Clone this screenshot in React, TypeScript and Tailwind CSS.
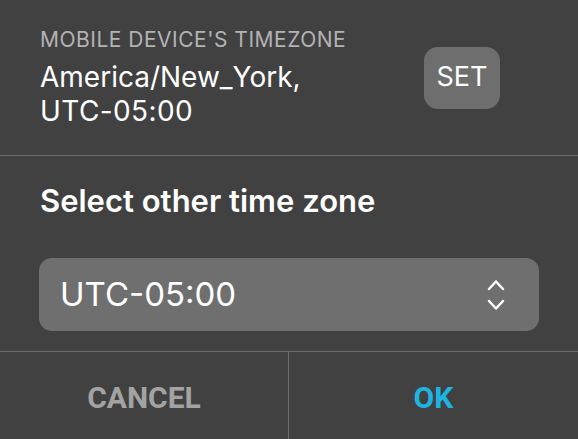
import React from 'react';

const sans = "font-['Inter','Noto_Sans',sans-serif]";

function UpDownIcon() {
  return (
    <svg width="20" height="36" viewBox="0 0 20 36" fill="none" stroke="currentColor" strokeWidth="2.5" strokeLinecap="round" strokeLinejoin="round">
      <polyline points="3,12 10,4.5 17,12" />
      <polyline points="3,24 10,31.5 17,24" />
    </svg>
  );
}

export default function App() {
  return (
    <div className={`w-[578px] h-[439px] bg-[#414141] flex flex-col text-white ${sans}`}>
      {/* Device timezone */}
      <div className="h-[156px] border-b border-[#6b6b6b] flex items-center justify-between pl-10 pr-[78px]">
        <div className="flex flex-col">
          <span className="text-[21px] leading-[24px] text-[#b3b3b3] tracking-[0.5px]">MOBILE DEVICE'S TIMEZONE</span>
          <span className="mt-2 text-[28px] leading-[34px]">America/New_York,</span>
          <span className="text-[28px] leading-[34px] tracking-[0.4px]">UTC-05:00</span>
        </div>
        <button className="w-[76px] h-[62px] rounded-[14px] bg-[#6e6e6e] text-[27px] text-white">SET</button>
      </div>

      {/* Other time zone */}
      <div className="flex flex-col px-[39px] pt-[26px]">
        <h2 className="text-[31px] leading-[37px] font-semibold pl-px">Select other time zone</h2>
        <div className="mt-[39px] h-[73px] rounded-[13px] bg-[#6f6f6f] flex items-center justify-between pl-[21px] pr-[33px]">
          <span className="text-[33px]">UTC-05:00</span>
          <UpDownIcon />
        </div>
      </div>

      {/* Actions */}
      <div className="mt-auto h-[88px] border-t border-[#6b6b6b] grid grid-cols-2 font-['Roboto',sans-serif] font-bold text-[30px]">
        <button className="border-r border-[#6b6b6b] text-[#a3a3a3] pt-1">CANCEL</button>
        <button className="text-[#1cb4e3] pt-1">OK</button>
      </div>
    </div>
  );
}
